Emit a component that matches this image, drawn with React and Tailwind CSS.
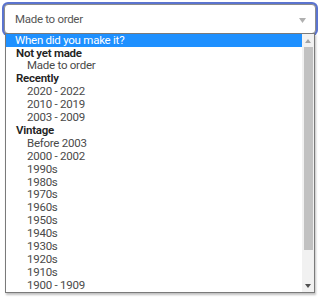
import React from 'react';

const groups = [
    { label: 'Not yet made', items: ['Made to order'] },
    { label: 'Recently', items: ['2020 - 2022', '2010 - 2019', '2003 - 2009'] },
    {
        label: 'Vintage',
        items: ['Before 2003', '2000 - 2002', '1990s', '1980s', '1970s', '1960s', '1950s', '1940s', '1930s', '1920s', '1910s', '1900 - 1909'],
    },
];

export default function App() {
    return (
        <div className="w-[320px] h-[297px] bg-white p-[4px]" style={{ fontFamily: 'Roboto, "Liberation Sans", sans-serif' }}>
            {/* closed select */}
            <div className="h-[30px] rounded-[4px] border border-[#8c8c8c] ring-2 ring-[#5b74cf] bg-white flex items-center justify-between pl-[10px] pr-[9px] pt-[2px]">
                <span className="text-[#555] text-[11.5px] tracking-[-0.3px]">Made to order</span>
                <svg width="7" height="5" viewBox="0 0 7 5">
                    <path d="M0 0 L7 0 L3.5 5 Z" fill="#b0b0b0" />
                </svg>
            </div>

            {/* open list */}
            <div className="relative -mt-[1px] mx-[1px] h-[260px] border border-[#7a7a7a] bg-white flex shadow-[1px_2px_2px_rgba(0,0,0,0.25)]">
                <ul className="flex-1 h-full grid grid-rows-[repeat(20,1fr)] text-[11.5px] leading-none tracking-[-0.25px]">
                    <li className="flex items-center bg-[#1e90ff] text-white pl-[9px]">When did you make it?</li>
                    {groups.map(g => (
                        <React.Fragment key={g.label}>
                            <li className="flex items-center pl-[10px] font-semibold text-[#222]">{g.label}</li>
                            {g.items.map(it => (
                                <li key={it} className="flex items-center pl-[21px] text-[#4a4a4a]">{it}</li>
                            ))}
                        </React.Fragment>
                    ))}
                </ul>
                {/* scrollbar */}
                <div className="w-[12px] bg-[#f1f1f1] flex flex-col items-center">
                    <div className="h-[13px] flex items-center justify-center">
                        <svg width="6" height="4" viewBox="0 0 6 4"><path d="M0 4 L6 4 L3 0 Z" fill="#a3a3a3" /></svg>
                    </div>
                    <div className="w-[9px] h-[203px] bg-[#c1c1c1]" />
                    <div className="flex-1" />
                    <div className="h-[13px] flex items-center justify-center">
                        <svg width="6" height="4" viewBox="0 0 6 4"><path d="M0 0 L6 0 L3 4 Z" fill="#505050" /></svg>
                    </div>
                </div>
            </div>
        </div>
    );
}
